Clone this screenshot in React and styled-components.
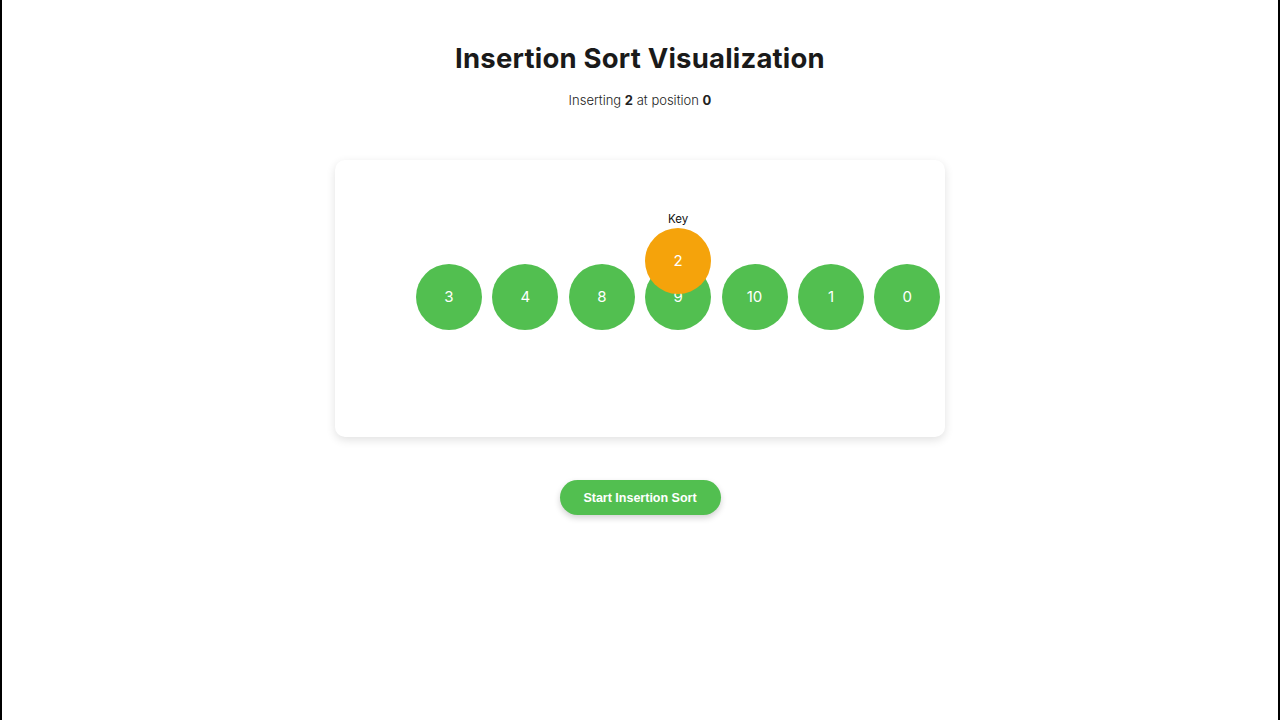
import React from "react";
import styled, { createGlobalStyle } from "styled-components";

const GlobalStyle = createGlobalStyle`
  html, body {
    margin: 0;
    padding: 0;
    background: #fff;
  }
  body {
    font-family: "Inter", "Noto Sans", sans-serif;
    color: #1c1c1c;
  }
`;

const Page = styled.div`
  box-sizing: border-box;
  height: 720px;
  border-left: 2px solid #000;
  border-right: 2px solid #000;
  display: flex;
  flex-direction: column;
  align-items: center;
  padding-top: 41px;
`;

const Title = styled.h1`
  margin: 0;
  font-size: 27.5px;
  font-weight: 700;
  letter-spacing: 0.2px;
  color: #1a1a1a;
`;

const Status = styled.p`
  margin: 17px 0 0;
  font-size: 13px;
  font-weight: 300;
  color: #222;
  b {
    font-weight: 700;
  }
`;

const Card = styled.section`
  box-sizing: border-box;
  margin-top: 52px;
  width: 610px;
  height: 277px;
  background: #fff;
  border-radius: 10px;
  box-shadow: 0 3px 10px rgba(0, 0, 0, 0.12);
  display: flex;
  align-items: center;
  padding-left: 81px;
`;

const Row = styled.div`
  display: flex;
  gap: 10.4px;
  margin-top: -4px;
`;

const Slot = styled.div`
  position: relative;
  width: 66px;
  height: 66px;
`;

const Bubble = styled.div`
  width: 66px;
  height: 66px;
  border-radius: 50%;
  background: ${(p) => (p.$active ? "#f5a30b" : "#52bf50")};
  color: #fff;
  display: flex;
  align-items: center;
  justify-content: center;
  font-size: 15px;
  font-weight: 400;
`;

const KeyWrap = styled.div`
  position: absolute;
  left: 0;
  top: -52px;
  display: flex;
  flex-direction: column;
  align-items: center;
  gap: 2px;
  z-index: 1;
`;

const KeyLabel = styled.span`
  font-size: 11.5px;
  color: #111;
`;

const StartButton = styled.button`
  margin-top: 43px;
  width: 161px;
  height: 35px;
  border: none;
  border-radius: 18px;
  background: #52bf50;
  color: #fff;
  font-family: "Liberation Sans", Arial, sans-serif;
  font-weight: 700;
  font-size: 12.5px;
  box-shadow: 0 3px 6px rgba(0, 0, 0, 0.18);
  cursor: pointer;
`;

const values = [3, 4, 8, 9, 10, 1, 0];
const keyIndex = 3;
const keyValue = 2;

export default function App() {
  return (
    <>
      <GlobalStyle />
      <Page>
        <Title>Insertion Sort Visualization</Title>
        <Status>
          Inserting <b>{keyValue}</b> at position <b>0</b>
        </Status>
        <Card>
          <Row>
            {values.map((v, i) => (
              <Slot key={i}>
                <Bubble>{v}</Bubble>
                {i === keyIndex && (
                  <KeyWrap>
                    <KeyLabel>Key</KeyLabel>
                    <Bubble $active>{keyValue}</Bubble>
                  </KeyWrap>
                )}
              </Slot>
            ))}
          </Row>
        </Card>
        <StartButton>Start Insertion Sort</StartButton>
      </Page>
    </>
  );
}
